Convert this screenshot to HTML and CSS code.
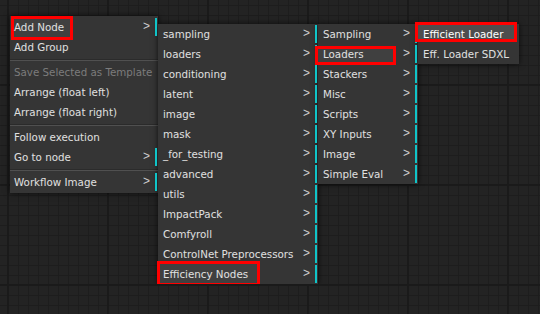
FILE: index.html
```html
<!DOCTYPE html>
<html lang="en">
<head>
<meta charset="UTF-8">
<meta name="viewport" content="width=device-width, initial-scale=1.0">
<title>Canvas Menu</title>
<link rel="stylesheet" href="styles.css">
</head>
<body>

<div class="menus">
  <div class="menu menu-main">
    <div class="entry sub"><span class="mark mark-add"></span>Add Node</div>
    <div class="entry">Add Group</div>
    <div class="separator"></div>
    <div class="entry disabled">Save Selected as Template</div>
    <div class="entry">Arrange (float left)</div>
    <div class="entry">Arrange (float right)</div>
    <div class="separator"></div>
    <div class="entry">Follow execution</div>
    <div class="entry sub">Go to node</div>
    <div class="separator"></div>
    <div class="entry sub">Workflow Image</div>
  </div>

  <div class="menu menu-cats">
    <div class="entry sub">sampling</div>
    <div class="entry sub">loaders</div>
    <div class="entry sub">conditioning</div>
    <div class="entry sub">latent</div>
    <div class="entry sub">image</div>
    <div class="entry sub">mask</div>
    <div class="entry sub">_for_testing</div>
    <div class="entry sub">advanced</div>
    <div class="entry sub">utils</div>
    <div class="entry sub">ImpactPack</div>
    <div class="entry sub">Comfyroll</div>
    <div class="entry sub">ControlNet Preprocessors</div>
    <div class="entry sub"><span class="mark mark-eff"></span>Efficiency Nodes</div>
  </div>

  <div class="menu menu-eff">
    <div class="entry sub">Sampling</div>
    <div class="entry sub"><span class="mark mark-loaders"></span>Loaders</div>
    <div class="entry sub">Stackers</div>
    <div class="entry sub">Misc</div>
    <div class="entry sub">Scripts</div>
    <div class="entry sub">XY Inputs</div>
    <div class="entry sub">Image</div>
    <div class="entry sub">Simple Eval</div>
  </div>

  <div class="menu menu-loaders">
    <div class="entry active"><span class="mark mark-loader"></span>Efficient Loader</div>
    <div class="entry">Eff. Loader SDXL</div>
  </div>
</div>

</body>
</html>
```

FILE: styles.css
```css
html {
  background-color: #232323;
  background-image:
    linear-gradient(90deg, #1a1a1a 2px, transparent 2px),
    linear-gradient(#1a1a1a 2px, transparent 2px),
    linear-gradient(90deg, #1d1d1d 1px, transparent 1px),
    linear-gradient(#1d1d1d 1px, transparent 1px);
  background-size: 100px 100px, 100px 100px, 10px 10px, 10px 10px;
  background-position: 107px 0, 0 84px, 8px 0, 0 5px;
  height: 100%;
}
body {
  margin: 0;
  font-family: "DejaVu Sans", Verdana, sans-serif;
  font-size: 10.3px;
  color: #e0e0e0;
}
.menus {
  display: flex;
  align-items: flex-start;
  padding: 16px 0 0 10px;
}
.menu {
  display: flex;
  flex-direction: column;
  background-color: #353535;
  box-shadow: 0 0 6px rgba(0, 0, 0, 0.7);
  margin-top: 8px;
}
.menu-main {
  width: 148px;
  margin-top: 0;
  padding: 1px 0;
}
.menu-cats {
  width: 160px;
}
.menu-eff {
  width: 100px;
}
.menu-loaders {
  width: 101px;
}
.entry {
  position: relative;
  z-index: 0;
  display: flex;
  align-items: center;
  height: 18px;
  margin: 1px 1px 1px 0;
  padding: 0 5px 0 5px;
  border-right: 2px solid transparent;
  white-space: nowrap;
}
.menu-main .entry {
  padding-left: 4px;
}
.entry.sub {
  border-right-color: #10c4c8;
}
.entry.sub::after {
  content: ">";
  margin-left: auto;
  padding-bottom: 2px;
  font-family: "Liberation Sans", Arial, sans-serif;
  font-size: 12px;
  color: #cfcfcf;
}
.entry.disabled {
  color: #7c7c7c;
}
.entry.active {
  color: #fff;
}
.separator {
  height: 0;
  margin: 2px 0 1px;
  border-top: 1px solid #2b2b2b;
  border-bottom: 1px solid #505050;
}
.mark {
  position: absolute;
  z-index: -1;
  border: 3px solid #f00;
  background-color: rgba(255, 255, 255, 0.06);
}
.mark-add {
  left: 1px;
  top: -2px;
  width: 56px;
  height: 18px;
}
.mark-eff {
  left: -1px;
  top: -4px;
  width: 97px;
  height: 19px;
}
.mark-loaders {
  left: -3px;
  top: 1px;
  width: 75px;
  height: 13px;
}
.mark-loader {
  left: -3px;
  top: -3px;
  width: 96px;
  height: 14px;
  background-color: #4e4e4e;
}
```
